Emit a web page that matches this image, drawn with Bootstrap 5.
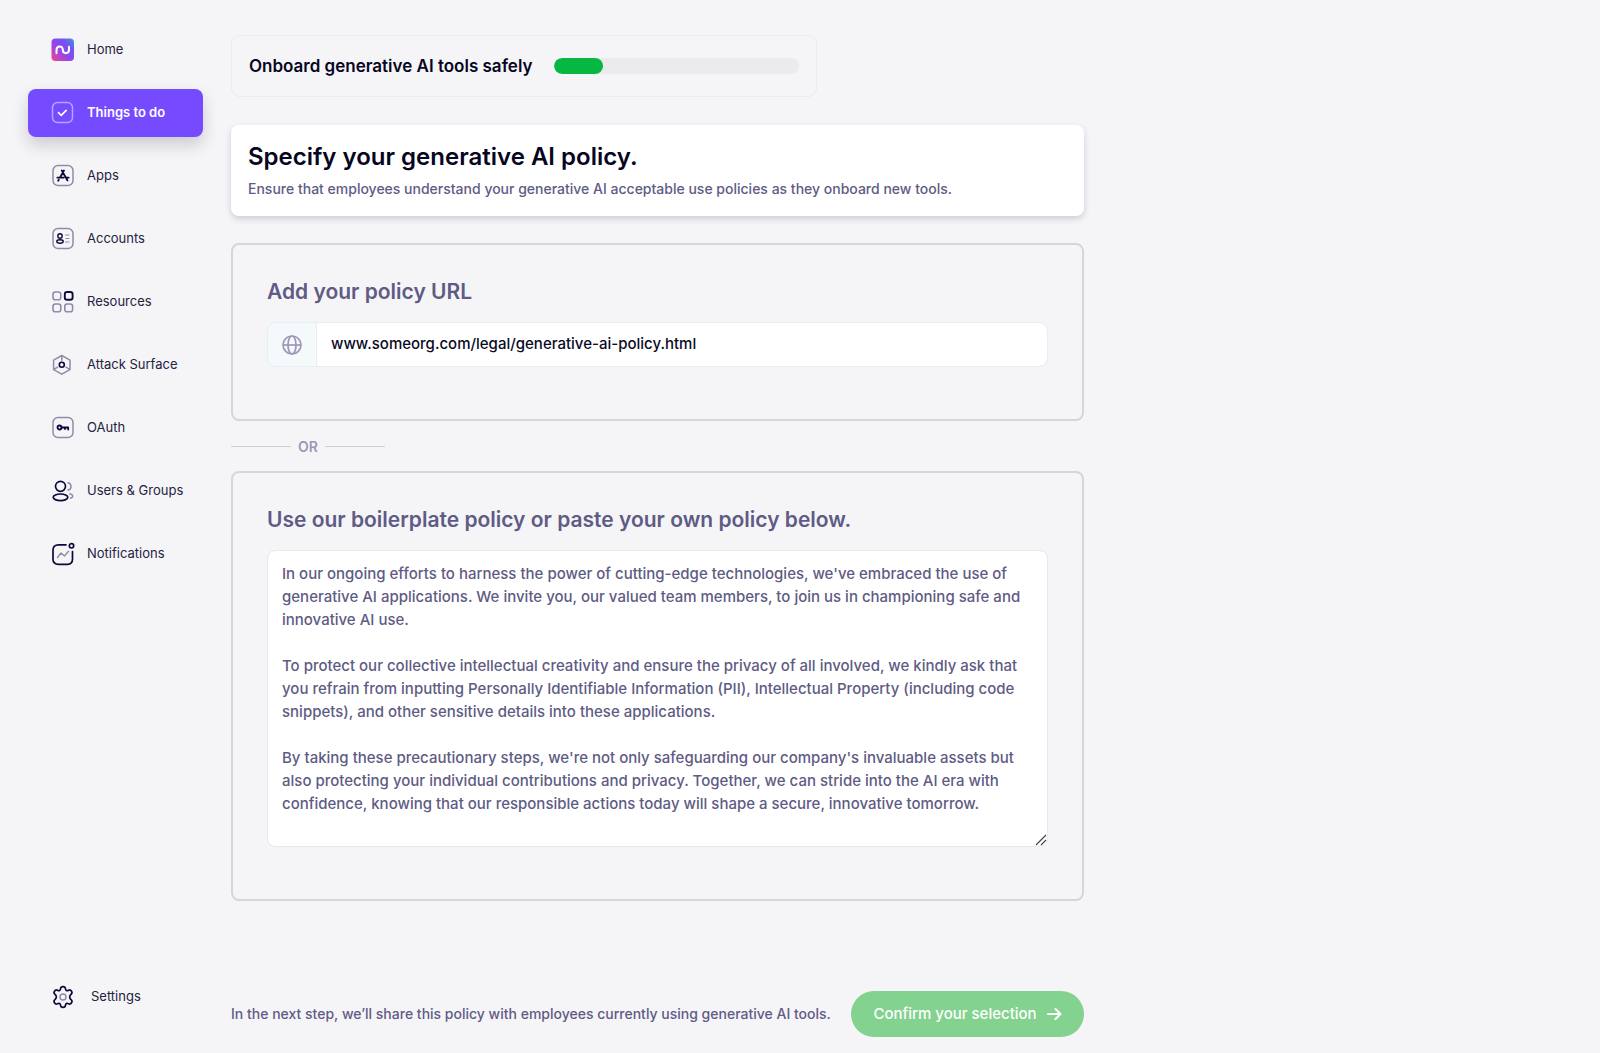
<!DOCTYPE html>
<html lang="en">
<head>
<meta charset="utf-8">
<meta name="viewport" content="width=device-width, initial-scale=1">
<title>Specify your generative AI policy</title>
<link href="https://cdn.jsdelivr.net/npm/bootstrap@5.3.0/dist/css/bootstrap.min.css" rel="stylesheet">
<style>
  :root { --ink: #07061f; --navy: #0b0a3a; --muted: #605b84; --soft: #9c98b6; --line: #d6d5df; }
  body { font-family: Inter, "Liberation Sans", sans-serif; background: #f5f5f8; color: var(--ink); }
  .shell { min-height: 100vh; }
  .side { width: 203px; padding: 26px 0 32px 28px; }
  .side-list { gap: 15px; }
  .side .nav-link { height: 48px; padding: 0 0 0 23px; gap: 12px; border-radius: 8px; font-size: 13px; color: #24233d; }
  .side .nav-link.active { background: #764aff; color: #fff; font-weight: 600; box-shadow: 0 8px 16px rgba(20, 18, 40, .18); }
  .side .settings-link { gap: 16px; }
  .side svg { width: 24px; height: 24px; flex: none; fill: none; stroke: var(--navy); stroke-width: 1.7; stroke-linecap: round; stroke-linejoin: round; }
  .side svg .pale { stroke: #8f8bab; }
  .content { max-width: 909px; padding: 35px 28px 16px 28px; }
  .onboard { width: 586px; max-width: 100%; height: 62px; padding: 0 17px; border: 1px solid #ececf0; border-radius: 9px; }
  .onboard-title { font-size: 17px; line-height: 24px; font-weight: 600; }
  .onboard .progress { width: 245px; height: 16px; border-radius: 8px; background: #ebebee; }
  .onboard .progress-bar { background: #06b843; border-radius: 8px; }
  .intro { margin-top: 28px; padding: 15px 17px 17px; border-radius: 8px; background: #fff; box-shadow: 0 3px 6px rgba(50, 45, 100, .2); }
  .intro h1 { font-size: 24px; line-height: 33px; font-weight: 600; }
  .intro p { font-size: 14px; line-height: 20px; font-weight: 500; color: var(--muted); margin-top: 6px; }
  .option { border: 2px solid var(--line); border-radius: 8px; padding: 34px 34px 52px; }
  .url-option { margin-top: 27px; }
  .option-title { font-size: 21px; line-height: 26px; font-weight: 600; color: var(--muted); margin-bottom: 17px; }
  .url-group { height: 45px; }
  .url-group .input-group-text { width: 50px; background: #f4f9fb; border-color: #e9eef2; border-radius: 9px; padding: 0; }
  .url-group .form-control { font-size: 15px; font-weight: 500; color: #0b0a1f; border-color: #ebebf0; border-radius: 9px; padding: 0 14px; }
  .policy-text.form-control { height: 297px; padding: 11px 14px; font-size: 15px; line-height: 23px; font-weight: 500; color: var(--muted); border-color: #e8e8ee; border-radius: 8px; resize: vertical; }
  .policy-text::-webkit-resizer { background: url("data:image/svg+xml,%3Csvg xmlns='http://www.w3.org/2000/svg' width='15' height='15' stroke='%23444' stroke-width='1.2'%3E%3Cpath d='M4 14L14 4M9 14l5-5'/%3E%3C/svg%3E") no-repeat right bottom; }
  .divider { height: 50px; gap: 7px; font-size: 14px; font-weight: 600; color: var(--soft); }
  .divider-line { width: 60px; height: 1px; background: #cfced9; }
  .finish { margin-top: 90px; }
  .finish p { font-size: 14px; line-height: 20px; font-weight: 500; color: var(--muted); }
  .btn-confirm, .btn-confirm:hover { width: 233px; height: 46px; background: #83d28f; color: #fff; font-size: 15px; font-weight: 500; padding: 0; gap: 10px; }
</style>
</head>
<body>
<div class="shell d-flex">
  <nav class="side d-flex flex-column flex-shrink-0" aria-label="Main">
    <div class="side-list nav flex-column">
      <a class="nav-link d-flex align-items-center" href="#home">
        <svg viewBox="0 0 24 24" aria-hidden="true">
          <defs>
            <linearGradient id="brand" x1="0" y1="1" x2="1" y2="0"><stop offset="0" stop-color="#f5487f"/><stop offset=".4" stop-color="#9a45e8"/><stop offset=".7" stop-color="#7550f4"/><stop offset="1" stop-color="#3e9bd0"/></linearGradient>
          </defs>
          <rect x=".5" y=".5" width="22.500" height="22.500" rx="4" fill="url(#brand)" stroke="none"/>
          <path d="M5.500 15.200V12C5.500 7.300 11.800 7.300 11.800 11.800S18 16.300 18 11.800V8.700" stroke="#fff" stroke-width="2"/>
        </svg>Home</a>
      <a class="nav-link active d-flex align-items-center" href="#todo" aria-current="page">
        <svg viewBox="0 0 24 24" aria-hidden="true"><rect x="1.500" y="1.500" width="20" height="20" rx="5" stroke="#b9a3ff" stroke-width="1.500"/><path d="M7.500 11.700l2.700 2.600 5-5" stroke="#fff"/></svg>Things to do</a>
      <a class="nav-link d-flex align-items-center" href="#apps">
        <svg viewBox="0 0 24 24" aria-hidden="true"><rect class="pale" x="2" y="1.500" width="20" height="20" rx="5" stroke-width="1.500"/><path d="M10.800 6.500l5.700 10M13 6.500L9.200 13.300M7.800 15.700l-.6 1M6.300 13.600h6.400M15.700 13.600h2" stroke-width="1.800"/></svg>Apps</a>
      <a class="nav-link d-flex align-items-center" href="#accounts">
        <svg viewBox="0 0 24 24" aria-hidden="true"><rect class="pale" x="2" y="1.500" width="20" height="20" rx="5" stroke-width="1.500"/><circle cx="9" cy="9" r="2.200" stroke-width="1.400"/><ellipse cx="9" cy="14.500" rx="3.200" ry="1.700" stroke-width="1.400"/><path class="pale" d="M14.500 8h3.500M15 11.500h3M14.500 15h3.500" stroke-width="1"/></svg>Accounts</a>
      <a class="nav-link d-flex align-items-center" href="#resources">
        <svg viewBox="0 0 24 24" aria-hidden="true"><g stroke-width="1.600"><rect class="pale" x="2" y="2" width="7.800" height="7.800" rx="2.300"/><rect x="13.800" y="2" width="7.800" height="7.800" rx="2.300" stroke-width="1.900"/><rect class="pale" x="2" y="14" width="7.800" height="7.800" rx="2.300"/><rect class="pale" x="13.800" y="14" width="7.800" height="7.800" rx="2.300"/></g></svg>Resources</a>
      <a class="nav-link d-flex align-items-center" href="#surface">
        <svg viewBox="0 0 24 24" aria-hidden="true"><path class="pale" stroke-width="1.500" d="M10.800 2.500l8.200 4.600v9.500l-8.200 4.600-8.200-4.600V7.100zM10.800 2.500v4.700M2.600 16.600l4-2.400M19 16.600l-4-2.400"/><circle cx="10.800" cy="11.800" r="2.500" stroke-width="1.600"/></svg>Attack Surface</a>
      <a class="nav-link d-flex align-items-center" href="#oauth">
        <svg viewBox="0 0 24 24" aria-hidden="true"><rect class="pale" x="2" y="1.500" width="20" height="20" rx="5" stroke-width="1.500"/><circle cx="8.500" cy="11.500" r="2" stroke-width="1.800"/><path d="M10.800 11.500h6.400v2M14 11.500v1.500" stroke-width="1.800"/></svg>OAuth</a>
      <a class="nav-link d-flex align-items-center" href="#users">
        <svg viewBox="0 0 24 24" aria-hidden="true"><circle cx="9.500" cy="7.300" r="5"/><ellipse cx="9.500" cy="18.300" rx="7.300" ry="3.300"/><path class="pale" d="M17 3.700c4 .8 4 6.600 0 7.400M18.800 15c3.800.5 3.800 3.300.8 4.300" stroke-width="1.500"/></svg>Users &amp; Groups</a>
      <a class="nav-link d-flex align-items-center" href="#notifications">
        <svg viewBox="0 0 24 24" aria-hidden="true"><path d="M15 2.800H7.500C4 2.800 2 4.700 2 8v9C2 20.500 4 22.300 7.500 22.300h9c3.300 0 5-1.800 5-5.300V9.500"/><circle cx="20.500" cy="3.800" r="2.200"/><path class="pale" d="M6.500 15.500l3.500-4.500 3.500 3 4-4.700" stroke-width="1.400"/></svg>Notifications</a>
    </div>
    <a class="nav-link settings-link d-flex align-items-center mt-auto" href="#settings">
      <svg viewBox="0 0 24 24" aria-hidden="true"><path d="M9.600 3.500C9.800 1 14.200 1 14.400 3.500 14.600 5.600 15.800 6.200 17.600 5.200 19.900 4.100 22.200 7.800 20.100 9.300 18.200 10.600 18.200 13.200 20.100 14.600 22.200 16.200 19.900 19.900 17.600 18.800 15.800 17.800 14.600 18.400 14.400 20.500 14.200 23 9.800 23 9.600 20.500 9.400 18.400 8.200 17.800 6.400 18.800 4.100 19.900 1.800 16.200 3.900 14.600 5.800 13.200 5.800 10.600 3.900 9.300 1.800 7.800 4.100 4.100 6.400 5.200 8.200 6.200 9.400 5.600 9.600 3.500z"/><circle class="pale" cx="12" cy="12" r="3" stroke-width="1.500"/></svg>Settings</a>
  </nav>

  <main class="content flex-grow-1">
    <section class="onboard d-flex align-items-center justify-content-between">
      <div class="onboard-title text-nowrap">Onboard generative AI tools safely</div>
      <div class="progress" role="progressbar" aria-label="Onboarding progress" aria-valuenow="20" aria-valuemin="0" aria-valuemax="100">
        <div class="progress-bar" style="width: 20%"></div>
      </div>
    </section>

    <header class="intro">
      <h1 class="mb-0">Specify your generative AI policy.</h1>
      <p class="mb-0">Ensure that employees understand your generative AI acceptable use policies as they onboard new tools.</p>
    </header>

    <section class="option url-option">
      <label class="option-title d-block" for="policy-url">Add your policy URL</label>
      <div class="input-group url-group">
        <span class="input-group-text justify-content-center">
          <svg width="22" height="22" viewBox="0 0 22 22" fill="none" stroke="#9c98b6" stroke-width="1.700" aria-hidden="true"><circle cx="11" cy="11" r="9"/><ellipse cx="11" cy="11" rx="4" ry="9"/><path d="M2 11h18"/></svg>
        </span>
        <input type="text" class="form-control" id="policy-url" value="www.someorg.com/legal/generative-ai-policy.html">
      </div>
    </section>

    <div class="divider d-flex align-items-center">
      <span class="divider-line"></span><span>OR</span><span class="divider-line"></span>
    </div>

    <section class="option">
      <label class="option-title d-block" for="policy-text">Use our boilerplate policy or paste your own policy below.</label>
      <textarea class="form-control policy-text" id="policy-text" spellcheck="false">In our ongoing efforts to harness the power of cutting-edge technologies, we've embraced the use of generative AI applications. We invite you, our valued team members, to join us in championing safe and innovative AI use.

To protect our collective intellectual creativity and ensure the privacy of all involved, we kindly ask that you refrain from inputting Personally Identifiable Information (PII), Intellectual Property (including code snippets), and other sensitive details into these applications.

By taking these precautionary steps, we're not only safeguarding our company's invaluable assets but also protecting your individual contributions and privacy. Together, we can stride into the AI era with confidence, knowing that our responsible actions today will shape a secure, innovative tomorrow.</textarea>
    </section>

    <footer class="finish d-flex align-items-center justify-content-between">
      <p class="mb-0">In the next step, we’ll share this policy with employees currently using generative AI tools.</p>
      <button type="button" class="btn btn-confirm rounded-pill border-0 d-flex align-items-center justify-content-center flex-shrink-0">Confirm your selection
        <svg width="15" height="14" viewBox="0 0 15 14" fill="none" stroke="#fff" stroke-width="2" stroke-linecap="round" stroke-linejoin="round" aria-hidden="true"><path d="M1 7h12.500M8.500 2l5 5-5 5"/></svg>
      </button>
    </footer>
  </main>
</div>
<script src="https://cdn.jsdelivr.net/npm/bootstrap@5.3.0/dist/js/bootstrap.bundle.min.js"></script>
</body>
</html>
